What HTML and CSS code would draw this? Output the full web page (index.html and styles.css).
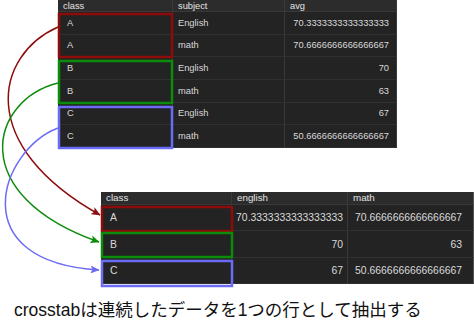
FILE: index.html
```html
<!DOCTYPE html>
<html lang="ja">
<head>
<meta charset="utf-8">
<link rel="stylesheet" href="styles.css">
</head>
<body>
<div class="page">
  <div class="grid t1">
    <div class="h">class</div><div class="h">subject</div><div class="h">avg</div>
    <div class="k">A</div><div>English</div><div class="n">70.3333333333333333</div>
    <div class="k">A</div><div>math</div><div class="n">70.6666666666666667</div>
    <div class="k">B</div><div>English</div><div class="n">70</div>
    <div class="k">B</div><div>math</div><div class="n">63</div>
    <div class="k">C</div><div>English</div><div class="n">67</div>
    <div class="k">C</div><div>math</div><div class="n">50.6666666666666667</div>
  </div>
  <div class="grid t2">
    <div class="h">class</div><div class="h">english</div><div class="h">math</div>
    <div class="k">A</div><div class="n e">70.3333333333333333</div><div class="n">70.6666666666666667</div>
    <div class="k">B</div><div class="n e">70</div><div class="n">63</div>
    <div class="k">C</div><div class="n e">67</div><div class="n">50.6666666666666667</div>
  </div>
  <p class="caption">crosstabは連続したデータを1つの行として抽出する</p>
  <svg class="overlay" width="474" height="323" viewBox="0 0 474 323">
    <defs>
      <marker id="mr" markerWidth="9" markerHeight="8" refX="8.5" refY="4" orient="auto" markerUnits="userSpaceOnUse"><path d="M0,0 L9,4 L0,8 L2,4 Z" fill="#8e0b0b"/></marker>
      <marker id="mg" markerWidth="9" markerHeight="8" refX="8.5" refY="4" orient="auto" markerUnits="userSpaceOnUse"><path d="M0,0 L9,4 L0,8 L2,4 Z" fill="#0b8c0b"/></marker>
      <marker id="mb" markerWidth="9" markerHeight="8" refX="8.5" refY="4" orient="auto" markerUnits="userSpaceOnUse"><path d="M0,0 L9,4 L0,8 L2,4 Z" fill="#6b6bf5"/></marker>
    </defs>
    <rect x="59" y="14" width="113" height="43" class="bx red"/>
    <rect x="59" y="61" width="113" height="42" class="bx green"/>
    <rect x="59" y="107" width="113" height="41" class="bx blue"/>
    <rect x="102" y="207" width="130" height="24" class="bx red"/>
    <rect x="102" y="233" width="130" height="24" class="bx green"/>
    <rect x="102" y="261" width="130" height="25" class="bx blue"/>
    <path d="M58,27 C-5,55 -25,145 100,215" class="ln" stroke="#8e0b0b" marker-end="url(#mr)"/>
    <path d="M58,83 C-10,100 -35,195 99,242" class="ln" stroke="#0b8c0b" marker-end="url(#mg)"/>
    <path d="M58,128 C0,150 -38,262 99,270" class="ln" stroke="#6b6bf5" marker-end="url(#mb)"/>
  </svg>
</div>
</body>
</html>
```
FILE: styles.css
```css
html, body {
  margin: 0;
  padding: 0;
  background: #ffffff;
}
.page {
  position: relative;
  width: 474px;
  height: 323px;
  overflow: hidden;
  font-family: "Liberation Sans", Arial, sans-serif;
}
.grid {
  display: grid;
  background: #232323;
  color: #d9d9d9;
  font-size: 9.3px;
}
.grid > div {
  box-sizing: border-box;
  border-bottom: 1px solid #303030;
  border-right: 1px solid #3a3a3a;
  display: flex;
  align-items: center;
  padding: 0 5px;
  white-space: nowrap;
  overflow: hidden;
}
.grid > .h {
  background: #2c2c2c;
  color: #e4e4e4;
  border-bottom: 1px solid #383838;
}
.grid > .k {
  padding-left: 9px;
}
.grid > .n {
  justify-content: flex-end;
  padding-right: 7px;
}
.t1 {
  margin-left: 58px;
  width: 339px;
  grid-template-columns: 115px 112px 112px;
  grid-template-rows: 12px repeat(6, 22.67px);
}
.t2 {
  margin-top: 44px;
  margin-left: 101px;
  width: 373px;
  font-size: 10.4px;
  grid-template-columns: 131px 116px 126px;
  grid-template-rows: 13px repeat(3, 26.5px);
}
.t2 > .h {
  font-size: 9.8px;
}
.t2 > .n {
  padding-right: 11px;
}
.t2 > .n.e {
  padding-right: 4px;
}
.t2 > div:nth-child(3n) {
  border-right: 1px solid #555555;
}
.caption {
  margin: 16px 0 0 14px;
  font-family: "Liberation Sans", "Noto Sans CJK JP", sans-serif;
  font-size: 17.5px;
  line-height: 20px;
  color: #111111;
}
.overlay {
  position: absolute;
  left: 0;
  top: 0;
  pointer-events: none;
}
.bx {
  fill: none;
  stroke-width: 2.5;
}
.red { stroke: #8e0b0b; }
.green { stroke: #0b8c0b; }
.blue { stroke: #6b6bf5; }
.ln {
  fill: none;
  stroke-width: 1.5;
}
```
